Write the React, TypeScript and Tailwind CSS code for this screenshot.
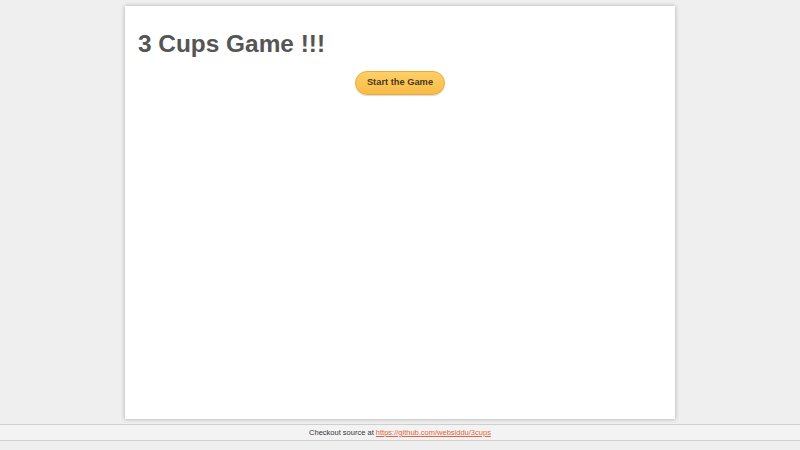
import React from 'react'

export default function App() {
  return (
    <div className="min-h-[450px] bg-[#efefef] flex flex-col font-['Liberation_Sans',Arial,sans-serif]">
      <main className="mx-auto mt-[6px] w-[550px] h-[413px] bg-white shadow-[0_0_4px_rgba(0,0,0,0.3)] px-[13px] pt-[26px]">
        <h1 className="text-[24.4px] leading-[24px] font-bold text-[#555]">3 Cups Game !!!</h1>
        <div className="flex justify-center mt-[15px]">
          <button className="h-[24px] w-[90px] rounded-full border border-[#e8ab3c] bg-gradient-to-b from-[#fdd067] to-[#f8bb45] text-[9.3px] font-bold text-[#4a3a1c] shadow-[0_1px_1px_rgba(0,0,0,0.15)]">
            Start the Game
          </button>
        </div>
      </main>

      <footer className="mt-[5px] h-[17px] border-y border-[#cfcfcf] bg-[#f3f3f3] flex items-center justify-center text-[7.5px] text-[#333]">
        <span>
          Checkout source at{' '}
          <a href="#" className="text-[#e5623b] underline">
            https://github.com/websiddu/3cups
          </a>
        </span>
      </footer>
    </div>
  )
}
